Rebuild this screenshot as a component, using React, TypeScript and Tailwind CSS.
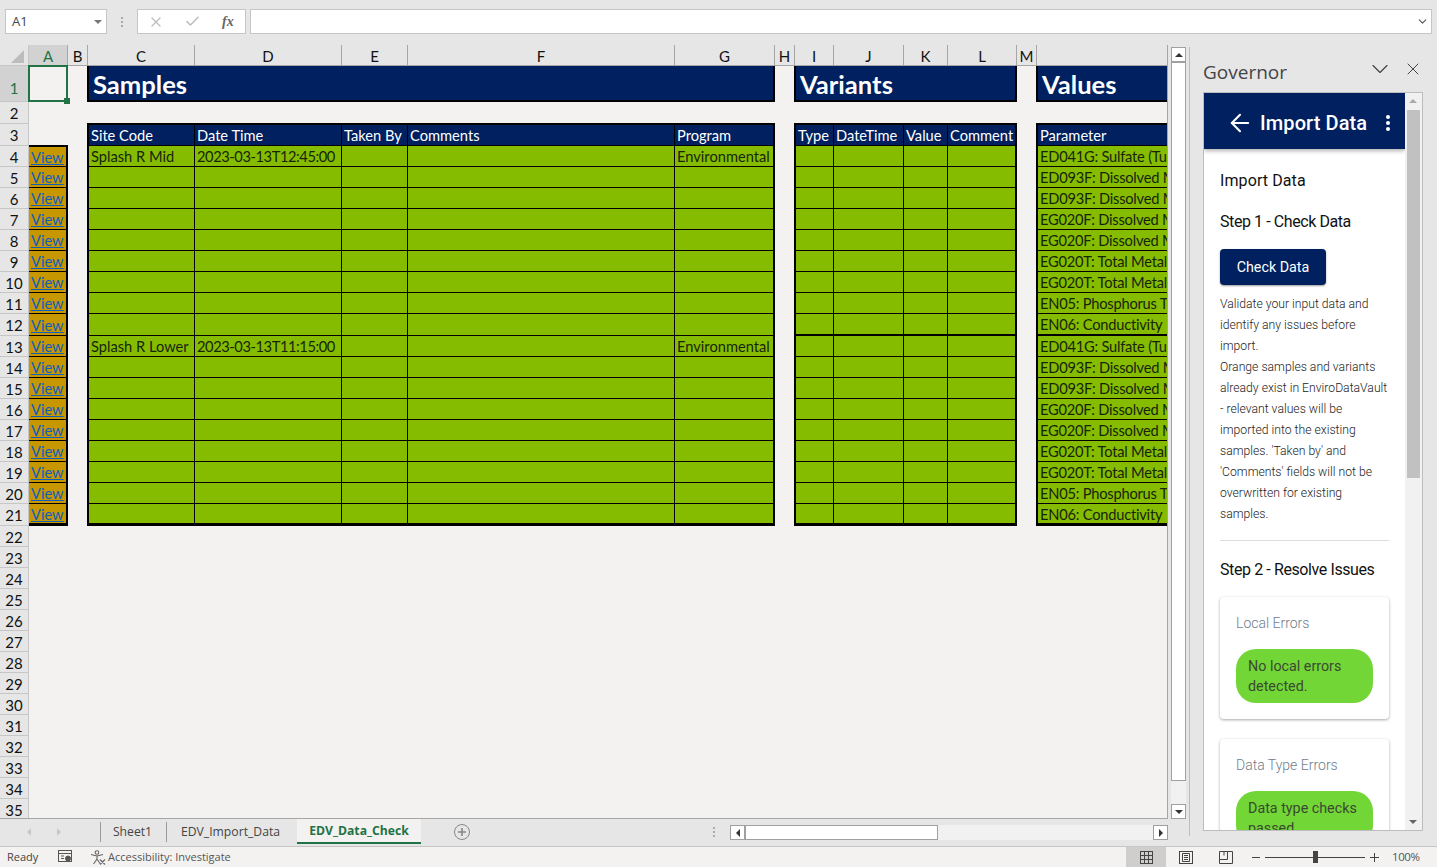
import React from "react";
import { ArrowLeft, Check, ChevronDown, X } from "lucide-react";

const XL = "font-['Lato','Liberation_Sans',sans-serif]";
const UI = "font-['Open_Sans','Liberation_Sans',sans-serif]";
const PANE = "font-['Roboto','Open_Sans',sans-serif]";

const colLabels = ["A", "B", "C", "D", "E", "F", "G", "H", "I", "J", "K", "L", "M", ""];
const rowCount = 35;
const params = [
  "ED041G: Sulfate (Turbidimetric)",
  "ED093F: Dissolved Major Cations",
  "ED093F: Dissolved Major Cations",
  "EG020F: Dissolved Metals by ICP-MS",
  "EG020F: Dissolved Metals by ICP-MS",
  "EG020T: Total Metals by ICP-MS",
  "EG020T: Total Metals by ICP-MS",
  "EN05: Phosphorus Total",
  "EN06: Conductivity",
];
const values = [...params, ...params];

function Tri({ dir, className = "" }: { dir: "up" | "down" | "left" | "right"; className?: string }) {
  const pts = { up: "0,6 4,2 8,6", down: "0,2 8,2 4,6", left: "6,0 6,8 2,4", right: "2,0 2,8 6,4" }[dir];
  return (
    <svg width="8" height="8" viewBox="0 0 8 8" className={className}>
      <polygon points={pts} fill="currentColor" />
    </svg>
  );
}

function ScrollBtn({ dir }: { dir: "up" | "down" | "left" | "right" }) {
  return (
    <div className="flex h-[15px] w-[15px] shrink-0 items-center justify-center border border-[#a0a0a0] bg-white text-[#333]">
      <Tri dir={dir} />
    </div>
  );
}

function RowHead({ n }: { n: number }) {
  const on = n === 1;
  return (
    <div
      className={`flex justify-center border-b border-r border-[#c6c6c6] text-[15px] leading-[19px] ${XL} ${
        on ? "items-end bg-[#d2d2d2] pb-[3px] text-[#217346]" : "items-start bg-[#e6e6e6] pt-[2px] text-[#111]"
      }`}
    >
      {n}
    </div>
  );
}

type CellProps = {
  text?: string;
  first?: boolean;
  last?: boolean;
  open?: boolean;
  top?: boolean;
  bottom?: boolean;
  thick?: boolean;
  header?: boolean;
  date?: boolean;
};

function Cell({ text, first, last, open, top, bottom, thick, header, date }: CellProps) {
  const bottomCls = bottom ? "border-b-[3px]" : thick ? "border-b-2" : "border-b";
  const rightCls = open ? "" : last ? "border-r-2" : "border-r";
  const track = date ? "tracking-[-0.42px]" : open && !header ? "tracking-[-0.22px]" : "";
  return (
    <div
      className={`flex items-center overflow-hidden whitespace-nowrap border-black pt-[2px] pl-[2px] text-[14.67px] ${XL} ${
        header ? "bg-[#002060] text-white" : "bg-[#85bc00] text-[#16250a]"
      } ${first ? "-ml-px border-l-2" : ""} ${rightCls} ${top ? "-mt-px border-t-2" : ""} ${bottomCls} ${track}`}
    >
      {text}
    </div>
  );
}

function Title({ text, span, last }: { text: string; span: string; last?: boolean }) {
  return (
    <div
      className={`${span} -ml-px flex items-center overflow-hidden border-b-2 border-l-2 border-black bg-[#002060] pt-[3px] pl-[4px] text-[25.6px] font-bold text-white ${XL} ${
        last ? "" : "border-r-2"
      }`}
    >
      {text}
    </div>
  );
}

function Empty() {
  return <div />;
}

function Sheet() {
  const rows: React.ReactNode[] = [];
  for (let n = 1; n <= rowCount; n++) {
    const cells: React.ReactNode[] = [<RowHead key="h" n={n} />];
    if (n === 1) {
      cells.push(
        <div key="a" className="relative z-10 -mt-px -ml-px border-2 border-[#217346]">
          <div className="absolute -right-[4px] -bottom-[4px] h-[6px] w-[6px] bg-[#217346]" />
        </div>,
        <Empty key="b" />,
        <Title key="s" text="Samples" span="col-span-5" />,
        <Empty key="h2" />,
        <Title key="v" text="Variants" span="col-span-4" />,
        <Empty key="m" />,
        <Title key="vv" text="Values" span="col-span-1" last />
      );
    } else if (n === 2) {
      cells.push(<div key="e" className="col-span-14" />);
    } else if (n >= 3 && n <= 21) {
      const head = n === 3;
      const bottom = n === 21;
      const thick = n === 12;
      const sample = (col: number) => {
        if (head) return ["Site Code", "Date Time", "Taken By", "Comments", "Program"][col];
        if (n === 4) return ["Splash R Mid", "2023-03-13T12:45:00", "", "", "Environmental"][col];
        if (n === 13) return ["Splash R Lower", "2023-03-13T11:15:00", "", "", "Environmental"][col];
        return "";
      };
      cells.push(
        head ? (
          <Empty key="a" />
        ) : (
          <div
            key="a"
            className={`flex items-center overflow-hidden border-r-2 border-black bg-[#c79700] pt-[2px] pl-[2px] text-[14.67px] text-[#0b5fc0] underline ${XL} ${
              n === 4 ? "-mt-px border-t-2" : ""
            } ${bottom ? "border-b-[3px]" : "border-b"}`}
          >
            View
          </div>
        ),
        <Empty key="b" />
      );
      [0, 1, 2, 3, 4].forEach((c) =>
        cells.push(
          <Cell key={`s${c}`} text={sample(c)} first={c === 0} last={c === 4} top={head} bottom={bottom} header={head} date={c === 1 && !head} />
        )
      );
      cells.push(<Empty key="h2" />);
      [0, 1, 2, 3].forEach((c) =>
        cells.push(
          <Cell key={`v${c}`} text={head ? ["Type", "DateTime", "Value", "Comment"][c] : ""} first={c === 0} last={c === 3} top={head} bottom={bottom} thick={thick} header={head} />
        )
      );
      cells.push(<Empty key="m" />);
      cells.push(<Cell key="p" text={head ? "Parameter" : values[n - 4] ?? ""} first open top={head} bottom={bottom} thick={thick} header={head} />);
    } else {
      cells.push(<div key="e" className="col-span-14" />);
    }
    rows.push(<React.Fragment key={n}>{cells}</React.Fragment>);
  }
  return (
    <div className="h-[773px] shrink-0 overflow-hidden border-r border-[#a6a6a6] bg-[#f3f2f1]">
      <div className="grid w-[1167px] grid-cols-[29px_39px_20px_107px_147px_66px_267px_100px_20px_39px_70px_44px_69px_20px_130px] grid-rows-[21px_36px_22px_22px_repeat(8,21px)_22px_repeat(8,21px)_22px_repeat(14,21px)]">
        <div className="flex items-end justify-end border-b border-r border-[#c6c6c6] bg-[#e6e6e6] pr-[3px] pb-[1px]">
          <svg width="14" height="14" viewBox="0 0 14 14">
            <polygon points="13,0 13,13 0,13" fill="#bdbdbd" />
          </svg>
        </div>
        {colLabels.map((c, i) => (
          <div
            key={i}
            className={`flex items-center justify-center border-b border-[#a6a6a6] pt-[2px] text-[15px] ${XL} ${i === 13 ? "" : "border-r"} ${
              i === 0 ? "bg-[#d2d2d2] text-[#217346]" : "bg-[#e6e6e6] text-[#111]"
            }`}
          >
            {c}
          </div>
        ))}
        {rows}
      </div>
    </div>
  );
}

function FormulaBar() {
  return (
    <div className="flex h-[45px] shrink-0 items-start gap-[4px] bg-[#e6e6e6] pt-[9px] pl-[5px] pr-[5px]">
      <div className={`flex h-[25px] w-[102px] items-center justify-between border border-[#c6c6c6] bg-white pl-[6px] pr-[4px] text-[13px] text-[#444] ${UI}`}>
        <span>A1</span>
        <Tri dir="down" className="text-[#777]" />
      </div>
      <div className="flex h-[25px] w-[22px] flex-col items-center justify-center gap-[2px]">
        <span className="h-[2px] w-[2px] bg-[#aaa]" />
        <span className="h-[2px] w-[2px] bg-[#aaa]" />
        <span className="h-[2px] w-[2px] bg-[#aaa]" />
      </div>
      <div className="flex h-[25px] w-[109px] items-center border border-[#c6c6c6] bg-white text-[#bdbdbd]">
        <X size={16} strokeWidth={1.8} className="ml-[10px]" />
        <Check size={17} strokeWidth={2.2} className="ml-[20px]" />
        <span className="ml-[21px] font-['Liberation_Serif',serif] text-[14px] font-bold italic text-[#666]">fx</span>
      </div>
      <div className="flex h-[25px] flex-1 items-center justify-end border border-[#c6c6c6] bg-white pr-[2px] text-[#555]">
        <ChevronDown size={13} />
      </div>
    </div>
  );
}

function Tabs() {
  return (
    <div className={`flex h-[28px] shrink-0 items-center bg-[#e6e6e6] pb-[2px] text-[12.2px] text-[#444] ${UI}`}>
      <div className="flex w-[100px] items-center gap-[22px] pl-[25px] text-[#c6c6c6]">
        <Tri dir="left" />
        <Tri dir="right" />
      </div>
      <div className="flex h-[20px] w-[66px] items-center justify-center border-l border-[#9a9a9a] pr-[2px]">Sheet1</div>
      <div className="flex h-[20px] w-[131px] items-center justify-center border-l border-[#9a9a9a] pr-[3px]">EDV_Import_Data</div>
      <div className="flex h-[25px] w-[124px] items-center justify-center self-start border-b-2 border-[#217346] bg-[#f3f2f1] pt-[2px] font-bold text-[#217346]">
        EDV_Data_Check
      </div>
      <div className="ml-[33px] flex h-[16px] w-[16px] items-center justify-center rounded-full border border-[#888]">
        <svg width="10" height="10" viewBox="0 0 10 10">
          <path d="M5 1v8M1 5h8" stroke="#888" strokeWidth="1.6" />
        </svg>
      </div>
      <div className="ml-[236px] flex w-[16px] flex-col items-center gap-[2px]">
        <span className="h-[2px] w-[2px] bg-[#aaa]" />
        <span className="h-[2px] w-[2px] bg-[#aaa]" />
        <span className="h-[2px] w-[2px] bg-[#aaa]" />
      </div>
      <div className="ml-[8px] flex flex-1 items-center pt-[1px]">
        <ScrollBtn dir="left" />
        <div className="h-[15px] w-[193px] border border-[#a0a0a0] bg-white" />
        <div className="h-[15px] flex-1 bg-[#f1f1f1]" />
        <ScrollBtn dir="right" />
      </div>
    </div>
  );
}

function VScroll() {
  return (
    <div className="flex w-[22px] shrink-0 bg-[#e6e6e6] pt-[2px] pb-[10px]">
      <div className="ml-[3px] flex h-[772px] w-[15px] flex-col">
        <ScrollBtn dir="up" />
        <div className="h-[719px] w-[15px] border border-[#a0a0a0] bg-white" />
        <div className="flex-1 bg-[#f1f1f1]" />
        <ScrollBtn dir="down" />
      </div>
      <div className="ml-[3px] h-[789px] w-px bg-[#bdbdbd]" />
    </div>
  );
}

function ResultCard({ title, text }: { title: string; text: string }) {
  return (
    <div className="mb-[20px] rounded-[4px] bg-white px-[16px] pt-[16px] pb-[16px] shadow-[0_1px_3px_rgba(0,0,0,0.35)]">
      <div className="text-[14px] font-light leading-[20px] text-[#6f7d8c]">{title}</div>
      <div className="mt-[16px] rounded-[20px] bg-[#73d637] px-[12px] py-[7px] text-[14.3px] leading-[20px] text-[#3a4a30]">{text}</div>
    </div>
  );
}

function Pane() {
  return (
    <div className={`flex flex-1 flex-col bg-[#e6e6e6] pl-[13px] pr-[14px] ${UI}`}>
      <div className="flex h-[47px] shrink-0 items-center justify-between text-[#444]">
        <span className="pt-[7px] text-[19px] text-[#444]">Governor</span>
        <div className="flex items-center gap-[9px]">
          <ChevronDown size={28} strokeWidth={1} />
          <X size={20} strokeWidth={1.2} />
        </div>
      </div>
      <div className={`flex h-[739px] shrink-0 overflow-hidden border border-[#bdbdbd] bg-white ${PANE}`}>
        <div className="w-[201px] shrink-0 overflow-hidden">
          <div className="flex h-[56px] items-center bg-[#002060] pt-[3px] pl-[22px] pr-[15px] text-white shadow-[0_2px_4px_rgba(0,0,0,0.3)]">
            <ArrowLeft size={28} strokeWidth={1.8} />
            <span className="ml-[6px] flex-1 text-[20px] font-medium tracking-[0.1px]">Import Data</span>
            <span className="flex flex-col gap-[2px]">
              <span className="h-[4px] w-[4px] rounded-full bg-white" />
              <span className="h-[4px] w-[4px] rounded-full bg-white" />
              <span className="h-[4px] w-[4px] rounded-full bg-white" />
            </span>
          </div>
          <div className="px-[16px] pt-[21px]">
            <div className="text-[16px] leading-[22px] tracking-[0.1px] text-[#111]">Import Data</div>
            <div className="mt-[19px] text-[16px] leading-[22px] tracking-[-0.42px] text-[#111]">Step 1 - Check Data</div>
            <div className="mt-[16px] flex h-[36px] w-[106px] items-center justify-center rounded-[4px] bg-[#002060] pt-[1px] text-[14.3px] text-white shadow-[0_1px_2px_rgba(0,0,0,0.4)]">
              Check Data
            </div>
            <p className="mt-[9px] text-[12.2px] font-light leading-[21px] text-[#222]">
              Validate your input data and identify any issues before import.
              <br />
              Orange samples and variants already exist in EnviroDataVault - relevant values will be imported into the existing samples. 'Taken by' and 'Comments' fields will not be overwritten for existing samples.
            </p>
            <div className="mt-[15px] h-px bg-[#ddd]" />
            <div className="mt-[18px] text-[16px] leading-[22px] tracking-[-0.4px] text-[#111]">Step 2 - Resolve Issues</div>
            <div className="mt-[16px]">
              <ResultCard title="Local Errors" text="No local errors detected." />
              <ResultCard title="Data Type Errors" text="Data type checks passed." />
            </div>
          </div>
        </div>
        <div className="relative flex-1 bg-[#f1f1f1] text-[#aaa]">
          <Tri dir="up" className="absolute top-[4px] left-[4px]" />
          <div className="absolute top-[17px] left-[2px] h-[368px] w-[13px] bg-[#c1c1c1]" />
          <Tri dir="down" className="absolute bottom-[4px] left-[4px] text-[#666]" />
        </div>
      </div>
    </div>
  );
}

function StatusBar() {
  return (
    <div className={`flex h-[21px] shrink-0 items-center border-t border-[#c6c6c6] bg-[#f3f2f1] text-[11px] text-[#444] ${UI}`}>
      <span className="ml-[7px] w-[51px]">Ready</span>
      <svg width="15" height="14" viewBox="0 0 15 14" fill="none" stroke="#555">
        <rect x="0.5" y="0.5" width="13" height="11" />
        <path d="M1 3.5h12M3 6h3M3 8.5h3" />
        <circle cx="10" cy="8.5" r="2.5" fill="#555" />
      </svg>
      <svg className="ml-[17px]" width="16" height="15" viewBox="0 0 16 15" fill="none" stroke="#666" strokeWidth="1.1">
        <circle cx="7" cy="2.5" r="1.8" />
        <path d="M1 4.5 7 6l6-1.5M7 6v3l-3.5 5M7 9l3 4.5M10 9.5l5 5M15 9.5l-5 5" />
      </svg>
      <span className="ml-[2px] w-[1018px] text-[#555]">Accessibility: Investigate</span>
      <div className="flex h-[20px] w-[40px] items-center justify-center bg-[#d0cecd]">
        <svg width="13" height="13" viewBox="0 0 13 13" fill="none" stroke="#444">
          <rect x="0.5" y="0.5" width="12" height="12" />
          <path d="M4.5 0v13M8.5 0v13M0 4.5h13M0 8.5h13" />
        </svg>
      </div>
      <svg className="ml-[13px]" width="14" height="13" viewBox="0 0 14 13" fill="none" stroke="#444">
        <rect x="0.5" y="0.5" width="13" height="12" />
        <path d="M3.5 2.5v8h7v-8zM5 4.5h4M5 6.5h4M5 8.5h4" />
      </svg>
      <svg className="ml-[26px]" width="14" height="13" viewBox="0 0 14 13" fill="none" stroke="#444">
        <path d="M0.5 0.5h13v12h-13zM0.5 8.5h8M8.5 0.5v8M5 0.5v4" />
      </svg>
      <span className="ml-[19px] h-px w-[8px] bg-[#444]" />
      <div className="relative ml-[5px] h-px w-[100px] bg-[#444]">
        <div className="absolute -top-[6px] left-[48px] h-[12px] w-[5px] bg-[#444]" />
      </div>
      <svg className="ml-[5px]" width="9" height="9" viewBox="0 0 9 9">
        <path d="M4.5 0v9M0 4.5h9" stroke="#444" />
      </svg>
      <span className="ml-[13px] text-[11.5px] tracking-[-0.4px] text-[#555]">100%</span>
    </div>
  );
}

export default function App() {
  return (
    <div className="flex h-[867px] w-[1437px] flex-col overflow-hidden bg-[#e6e6e6]">
      <FormulaBar />
      <div className="flex h-[801px] shrink-0">
        <div className="flex w-[1168px] shrink-0 flex-col border-b border-[#c6c6c6]">
          <Sheet />
          <div className="border-t border-[#a6a6a6]">
            <Tabs />
          </div>
        </div>
        <VScroll />
        <Pane />
      </div>
      <StatusBar />
    </div>
  );
}
